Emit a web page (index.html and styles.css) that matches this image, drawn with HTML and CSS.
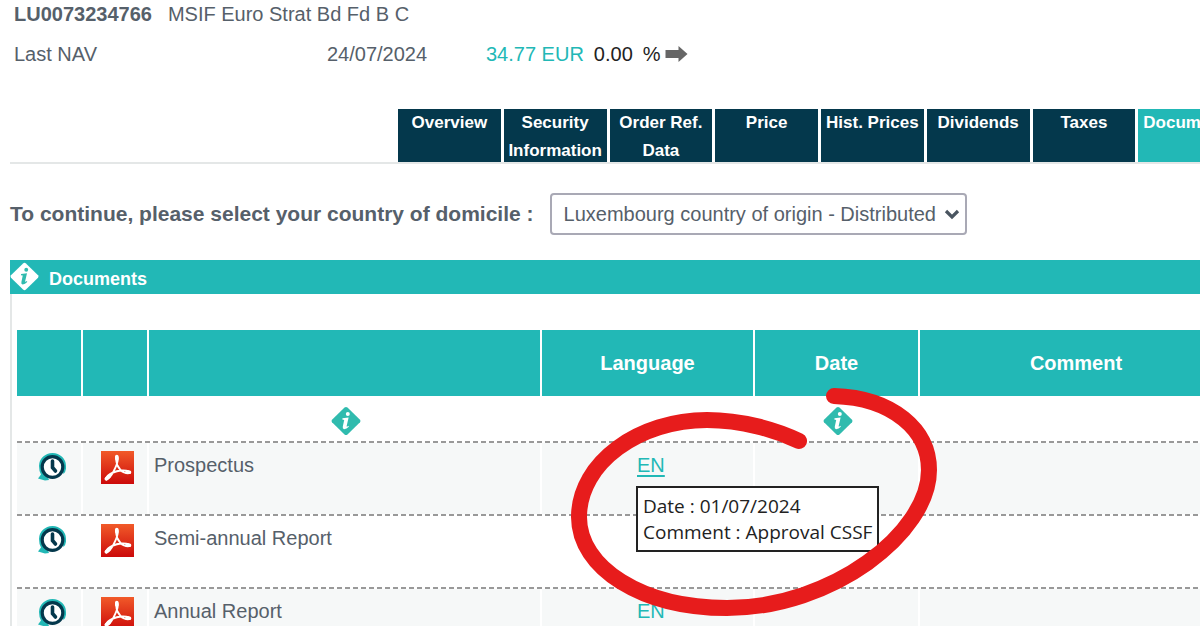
FILE: index.html
```
<!DOCTYPE html>
<html lang="en">
<head>
    <meta charset="UTF-8">
    <meta name="viewport" content="width=device-width, initial-scale=1.0">
    <title>MSIF Euro Strat Bd Fd B C - Documents</title>
    <link rel="stylesheet" href="styles.css">
</head>
<body>
    <!-- Shared icons -->
    <svg class="icon-defs" aria-hidden="true">
        <symbol id="info" viewBox="0 0 30 30">
            <path class="info-shape" d="M13.500 1.600Q15 .2 16.500 1.600L29 13.700Q30 15 29 16.300L16.500 28.400Q15 29.800 13.500 28.400L1 16.300Q0 15 1 13.700Z"/>
            <circle class="info-mark" cx="16.800" cy="8" r="2"/>
            <path class="info-mark" d="M11.500 12.300L17.600 11.600L15.600 20.300Q15.600 21 17.600 19.700L17.800 20.800Q15.500 23.300 13 23.200Q11.300 22.800 11.800 20.600L13.200 13.900L11.300 13.600Z"/>
        </symbol>
        <symbol id="history" viewBox="0 0 28 28">
            <path fill="#22b8b6" d="M1 13A13 12.500 0 0 1 28 13Q28.500 18 25.500 21L22 6L10 4L5 13L11 27L7 27.500L0 25.500L3 21.500Q1 18 1 13Z"/>
            <circle cx="14.500" cy="14" r="10.300" fill="#fff" stroke="#04384c" stroke-width="3.200"/>
            <path d="M14.500 8V14.500L17.500 18" fill="none" stroke="#04384c" stroke-width="3.600" stroke-linecap="round"/>
        </symbol>
        <symbol id="pdf" viewBox="0 0 33 33">
            <rect width="33" height="33" fill="url(#pdf-red)"/>
            <path d="M15.800 5.800Q14.500 9 16.500 14.500Q19 19.500 23 21.500Q27 23 29 21.800Q28.500 19 20 19.500Q11 20.700 6.500 25Q3.800 28 5.600 28.300Q8.500 28 12.500 20.500Q17 12 16.800 8Q16.800 5.500 15.800 5.800Z" fill="none" stroke="#fff" stroke-width="1.800" stroke-linejoin="round"/>
            <path d="M15.800 5.500V8M5.300 27.800L8 25.500M26 21L28.500 21.300" stroke="#fff" stroke-width="3.600" stroke-linecap="round"/>
        </symbol>
        <linearGradient id="pdf-red" x1="0" y1="0" x2="0" y2="1">
            <stop offset="0" stop-color="#f15a29"/>
            <stop offset="1" stop-color="#cc0a0a"/>
        </linearGradient>
    </svg>

    <div class="page">
        <header class="fund">
            <div class="fund-name"><strong>LU0073234766</strong><span>MSIF Euro Strat Bd Fd B C</span></div>
            <div class="nav-row">
                <span>Last NAV</span>
                <span>24/07/2024</span>
                <div class="nav-value">
                    <span class="price">34.77 EUR</span>
                    <span>0.00</span>
                    <span class="percent">%</span>
                    <svg class="arrow" viewBox="0 0 22 16"><path d="M0 4H13V0L22 8L13 16V12H0Z" fill="#666"/></svg>
                </div>
            </div>
        </header>

        <nav class="tabs">
            <a href="#">Overview</a>
            <a href="#">Security Information</a>
            <a href="#">Order Ref. Data</a>
            <a href="#">Price</a>
            <a href="#">Hist. Prices</a>
            <a href="#">Dividends</a>
            <a href="#">Taxes</a>
            <a href="#" class="active">Documents</a>
        </nav>

        <div class="domicile">
            <label for="country">To continue, please select your country of domicile :</label>
            <div class="select-box">
                <select id="country">
                    <option>Luxembourg country of origin - Distributed</option>
                </select>
                <svg class="chevron" viewBox="0 0 16 12"><path d="M2 3L8 9L14 3" fill="none" stroke="#4a5560" stroke-width="3.200"/></svg>
            </div>
        </div>

        <section class="panel">
            <h2 class="panel-title"><svg class="info light"><use href="#info"/></svg>Documents</h2>
            <table class="documents">
                <colgroup>
                    <col class="col-icon">
                    <col class="col-icon">
                    <col class="col-name">
                    <col class="col-language">
                    <col class="col-date">
                    <col>
                </colgroup>
                <thead>
                    <tr>
                        <th></th>
                        <th></th>
                        <th></th>
                        <th>Language</th>
                        <th>Date</th>
                        <th>Comment</th>
                    </tr>
                </thead>
                <tbody>
                    <tr class="info-row">
                        <td></td>
                        <td></td>
                        <td><svg class="info"><use href="#info"/></svg></td>
                        <td></td>
                        <td><svg class="info"><use href="#info"/></svg></td>
                        <td></td>
                    </tr>
                    <tr class="doc shaded">
                        <td class="icon-cell"><svg class="history"><use href="#history"/></svg></td>
                        <td class="icon-cell"><svg class="pdf"><use href="#pdf"/></svg></td>
                        <td>Prospectus</td>
                        <td class="language">
                            <div class="lang">
                                <a href="#" class="hovered">EN</a>
                                <div class="tooltip">Date : 01/07/2024<br>Comment : Approval CSSF</div>
                                <svg class="marker" viewBox="570 386 368 232">
                                    <path d="M834 396C893 398 929 430 929 470C929 533 832 608 727 608C642 608 579 568 579 517C579 462 640 420 707 420C742 420 776 430 799 441"/>
                                </svg>
                            </div>
                        </td>
                        <td></td>
                        <td></td>
                    </tr>
                    <tr class="doc">
                        <td class="icon-cell"><svg class="history"><use href="#history"/></svg></td>
                        <td class="icon-cell"><svg class="pdf"><use href="#pdf"/></svg></td>
                        <td>Semi-annual Report</td>
                        <td></td>
                        <td></td>
                        <td></td>
                    </tr>
                    <tr class="doc shaded">
                        <td class="icon-cell"><svg class="history"><use href="#history"/></svg></td>
                        <td class="icon-cell"><svg class="pdf"><use href="#pdf"/></svg></td>
                        <td>Annual Report</td>
                        <td class="language"><a href="#">EN</a></td>
                        <td></td>
                        <td></td>
                    </tr>
                </tbody>
            </table>
        </section>
    </div>
</body>
</html>
```
FILE: styles.css
```
* {
    margin: 0;
    padding: 0;
    box-sizing: border-box;
}

body {
    font-family: 'Liberation Sans', Arial, sans-serif;
    font-size: 20px;
    line-height: 28px;
    color: #56606a;
    background: #fff;
    height: 100vh;
    overflow: hidden;
}

a {
    color: #22b8b6;
    text-decoration: none;
}

.icon-defs {
    position: absolute;
    width: 0;
    height: 0;
}

/* The page runs a little past the right edge of the window */
.page {
    width: calc(100% + 41px);
    padding-left: 10px;
}

/* Fund header */
.fund {
    padding-left: 4px;
    margin-bottom: 41px;
}

.fund-name {
    display: flex;
    gap: 16px;
    margin-bottom: 12px;
}

.nav-row {
    display: grid;
    grid-template-columns: 313px 159px 1fr;
}

.nav-value {
    display: flex;
    align-items: center;
    gap: 10px;
    color: #222;
}

.price {
    color: #22b8b6;
}

.arrow {
    width: 23px;
    height: 16px;
    margin-left: -6px;
}

/* Tabs */
.tabs {
    display: flex;
    gap: 3px;
    padding-left: 388px;
    border-bottom: 2px solid #e4e7e7;
}

.tabs a {
    flex: 1 1 0;
    height: 53px;
    background: #04384c;
    color: #fff;
    font-size: 17px;
    font-weight: bold;
    text-align: center;
}

.tabs a.active {
    background: #22b8b6;
}

/* Country of domicile */
.domicile {
    display: flex;
    align-items: center;
    gap: 16px;
    margin: 29px 0 25px;
}

.domicile label {
    font-size: 21px;
    font-weight: bold;
}

.select-box {
    position: relative;
}

select {
    appearance: none;
    height: 42px;
    padding: 0 28px 0 12px;
    font: inherit;
    color: inherit;
    background: #fff;
    border: 2px solid #a9a9b5;
    border-radius: 4px;
}

.chevron {
    position: absolute;
    right: 7px;
    top: 15px;
    width: 16px;
    height: 12px;
    pointer-events: none;
}

/* Documents panel */
.panel {
    border: 2px solid #e4e7e7;
    border-top: none;
}

.panel-title {
    display: flex;
    gap: 10px;
    height: 34px;
    margin: 0 -2px 36px;
    background: #22b8b6;
    color: #fff;
    font-size: 18px;
    line-height: 38px;
}

.info {
    --mark: #fff;
    width: 30px;
    height: 30px;
    color: #30bbae;
}

.info-shape {
    fill: currentColor;
}

.info-mark {
    fill: var(--mark);
}

.info.light {
    --mark: #30bbae;
    width: 29px;
    height: 29px;
    margin-top: 2px;
    color: #fff;
}

.documents {
    width: calc(100% - 10px);
    margin: 0 5px;
    table-layout: fixed;
    border-collapse: separate;
    border-spacing: 0;
}

.col-icon {
    width: 66px;
}

.col-name {
    width: 393px;
}

.col-language {
    width: 213px;
}

.col-date {
    width: 165px;
}

.documents th {
    height: 66px;
    background: #22b8b6;
    border-right: 2px solid #fff;
    color: #fff;
}

.info-row td {
    height: 45px;
    padding-top: 10px;
    text-align: center;
    vertical-align: top;
    line-height: 0;
}

/* Dashed line above each document, unbroken across the cells */
.doc {
    background: repeating-linear-gradient(90deg, #999 0 5px, #fff 5px 8px) top / 100% 2px no-repeat;
}

.doc td {
    height: 73px;
    padding: 8px 5px;
    border-top: 2px solid transparent;
    border-right: 2px solid transparent;
    background-clip: padding-box;
    vertical-align: top;
}

.shaded td {
    background-color: #f6f8f8;
}

.doc .icon-cell {
    padding-left: 10px;
    text-align: center;
    line-height: 0;
}

.history {
    width: 28px;
    height: 28px;
    margin-top: 2px;
}

.pdf {
    width: 33px;
    height: 33px;
}

.doc .language {
    padding-left: 95px;
}

.hovered {
    text-decoration: underline;
    text-underline-offset: 3px;
}

.lang {
    position: relative;
}

.tooltip {
    position: absolute;
    left: -1px;
    top: 35px;
    z-index: 1;
    padding: 5px;
    background: #fff;
    border: 2px solid #222;
    color: #222;
    font-family: 'Open Sans', 'Noto Sans', sans-serif;
    font-size: 19px;
    line-height: 26px;
    white-space: nowrap;
}

/* Red marker ring around the tooltip */
.marker {
    position: absolute;
    left: -67px;
    top: -65px;
    z-index: 2;
    width: 368px;
    height: 232px;
    pointer-events: none;
}

.marker path {
    fill: none;
    stroke: #e71c1c;
    stroke-width: 16px;
    stroke-linecap: round;
}
```
